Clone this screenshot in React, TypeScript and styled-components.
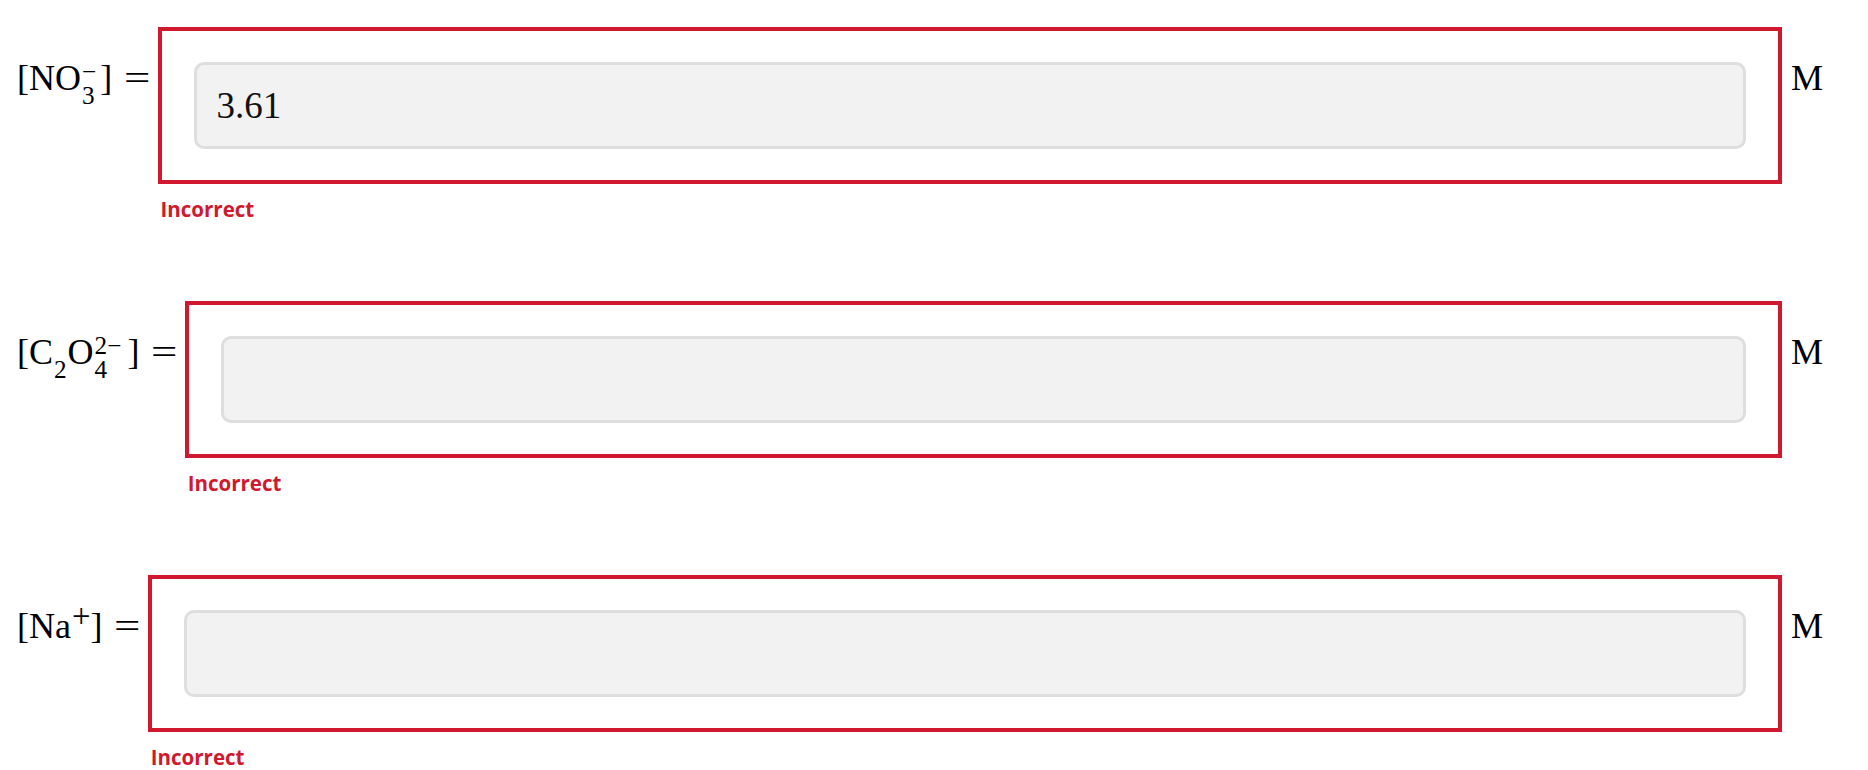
import React from 'react';
import styled, { createGlobalStyle } from 'styled-components';

const GlobalStyle = createGlobalStyle`
  html, body {
    margin: 0;
    padding: 0;
    background: #fff;
  }
  body {
    font-family: "Liberation Serif", "Times New Roman", serif;
    color: #000;
  }
`;

const RED = '#d0192e';

const Page = styled.div`
  display: flex;
  flex-direction: column;
  gap: 80px;
  padding: 27px 45px 0 17px;
`;

const Row = styled.div`
  display: flex;
  align-items: flex-start;
`;

const Label = styled.div`
  display: flex;
  align-items: baseline;
  margin-top: 31px;
  margin-right: 7px;
  font-size: 36px;
  line-height: 1.15;
  white-space: nowrap;
`;

const ScriptStack = styled.span<{ $after: number }>`
  display: inline-flex;
  flex-direction: column;
  align-items: flex-start;
  font-size: 0.7em;
  line-height: 0.95;
  margin: 0 ${(p) => p.$after}px 0 1px;
  align-self: center;
  transform: translateY(2px);
`;

const Sup = styled.span<{ $big?: boolean }>`
  display: block;
  font-size: ${(p) => (p.$big ? '1.3em' : '1em')};
  line-height: ${(p) => (p.$big ? '0.73' : '0.95')};
  transform: translateY(${(p) => (p.$big ? '-3px' : '0')});
`;

const Sub = styled.span`
  display: block;
`;

const Equals = styled.span`
  display: inline-block;
  margin-left: 12px;
  transform: scaleX(1.3);
  transform-origin: left center;
  padding-right: 6px;
`;

const Main = styled.div`
  flex: 1;
  display: flex;
  flex-direction: column;
`;

const AnswerBox = styled.div`
  border: 4px solid ${RED};
  padding: 31px 32px;
`;

const AnswerInput = styled.input`
  display: block;
  box-sizing: border-box;
  width: 100%;
  height: 87px;
  margin: 0;
  padding: 0 20px;
  border: 3px solid #dedede;
  border-radius: 10px;
  background: #f2f2f2;
  font-family: "Liberation Serif", "Times New Roman", serif;
  font-size: 37px;
  color: #111;
  outline: none;
`;

const Message = styled.div`
  margin-top: 13px;
  margin-left: 3px;
  font-family: "Open Sans", "Liberation Sans", sans-serif;
  font-weight: 700;
  font-size: 20.5px;
  line-height: 24px;
  color: ${RED};
`;

const Unit = styled.div`
  margin-top: 31px;
  margin-left: 9px;
  font-size: 36px;
  line-height: 1.15;
`;

function Scripts({ sup, sub, after = 4 }: { sup?: string; sub?: string; after?: number }) {
  return (
    <ScriptStack $after={after}>
      <Sup $big={sup === '+'}>{sup || '\u00a0'}</Sup>
      <Sub>{sub || '\u00a0'}</Sub>
    </ScriptStack>
  );
}

type Field = {
  id: string;
  label: () => React.ReactNode;
  value: string;
};

const fields: Field[] = [
  {
    id: 'no3',
    label: () => (
      <>
        [NO
        <Scripts sup="−" sub="3" />]
      </>
    ),
    value: '3.61',
  },
  {
    id: 'c2o4',
    label: () => (
      <>
        [C
        <Scripts sub="2" after={1} />O
        <Scripts sup="2−" sub="4" after={6} />]
      </>
    ),
    value: '',
  },
  {
    id: 'na',
    label: () => (
      <>
        [Na
        <Scripts sup="+" after={0} />]
      </>
    ),
    value: '',
  },
];

export default function App() {
  return (
    <>
      <GlobalStyle />
      <Page>
        {fields.map((f) => (
          <Row key={f.id}>
            <Label>
              {f.label()}
              <Equals>=</Equals>
            </Label>
            <Main>
              <AnswerBox>
                <AnswerInput readOnly value={f.value} />
              </AnswerBox>
              <Message>Incorrect</Message>
            </Main>
            <Unit>M</Unit>
          </Row>
        ))}
      </Page>
    </>
  );
}
